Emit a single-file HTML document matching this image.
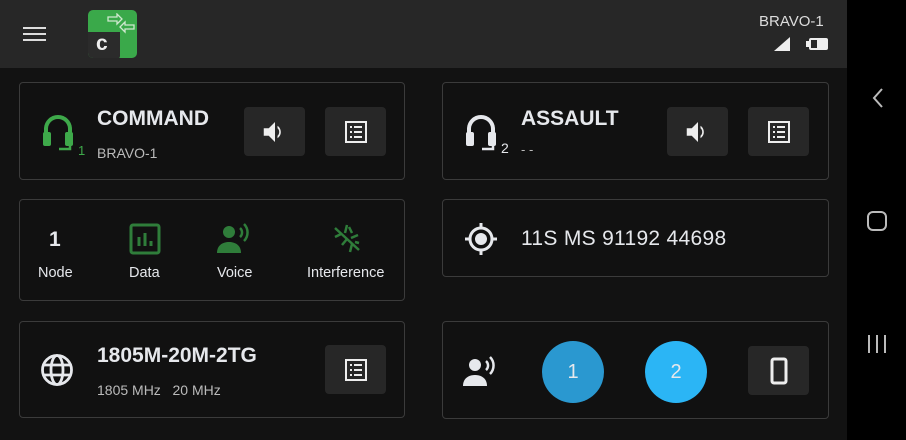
<!DOCTYPE html>
<html><head><style>
*{box-sizing:border-box;margin:0;padding:0}
body{width:906px;height:440px;background:#121212;font-family:"Liberation Sans",sans-serif;color:#e6e8ec;position:relative;overflow:hidden}
.abs{position:absolute}
.hdr{left:0;top:0;width:847px;height:68px;background:#272727}
.nav{left:847px;top:0;width:59px;height:440px;background:#000}
.card{position:absolute;border:1px solid #3b3b3b;border-radius:4px;background:#111}
.btn{position:absolute;background:#272727;border-radius:4px;display:flex;align-items:center;justify-content:center}
.t{position:absolute;white-space:nowrap}
</style></head><body>
<div class="abs hdr"></div>
<div class="abs nav"></div>
<div class="abs" style="left:23px;top:27px;width:23px;height:2px;background:#ddd"></div>
<div class="abs" style="left:23px;top:33px;width:23px;height:2px;background:#ddd"></div>
<div class="abs" style="left:23px;top:39px;width:23px;height:2px;background:#ddd"></div>
<!-- logo -->
<div class="abs" style="left:88px;top:10px;width:49px;height:48px;background:#3aa94a;border-radius:5px;overflow:hidden">
 <div class="abs" style="left:0;top:22px;width:32px;height:27px;background:#2b2b2b;border-radius:0 0 3px 0"></div>
 <div class="t" style="left:8px;top:22px;font-size:21px;font-weight:bold;color:#eee;line-height:24px">c</div>
 <svg class="abs" style="left:18px;top:3px" width="30" height="24" viewBox="0 0 30 24"><path d="M2 4h9V1l5 5-5 5V8H2z" fill="none" stroke="#cfe8cf" stroke-width="1.3"/><path d="M28 12h-9V9l-5 5 5 5v-3h9z" fill="none" stroke="#cfe8cf" stroke-width="1.3"/></svg>
</div>
<div class="t" style="left:759px;top:13px;font-size:15px;color:#ddd">BRAVO-1</div>
<svg class="abs" style="left:774px;top:37px" width="16" height="14"><path d="M0 14L16 0V14Z" fill="#eee"/></svg>
<svg class="abs" style="left:806px;top:38px" width="22" height="12"><rect x="3" y="0" width="19" height="12" rx="2" fill="#eee"/><rect x="0" y="3" width="3" height="6" fill="#eee"/><rect x="5" y="2" width="6" height="8" fill="#272727"/></svg>
<svg class="abs" style="left:870px;top:87px" width="16" height="22"><path d="M12 2L4 11l8 9" fill="none" stroke="#bbb" stroke-width="2"/></svg>
<div class="abs" style="left:867px;top:211px;width:20px;height:20px;border:2px solid #bbb;border-radius:6px"></div>
<div class="abs" style="left:868px;top:335px;width:2px;height:18px;background:#bbb"></div>
<div class="abs" style="left:876px;top:335px;width:2px;height:18px;background:#bbb"></div>
<div class="abs" style="left:884px;top:335px;width:2px;height:18px;background:#bbb"></div>

<!-- card command -->
<div class="card" style="left:19px;top:82px;width:386px;height:98px"></div>
<svg class="abs" style="left:41px;top:112px" width="34" height="40" viewBox="0 0 34 40"><path d="M5 26v-9a12 12 0 0 1 24 0v9" fill="none" stroke="#3ea94a" stroke-width="4"/><rect x="2" y="20" width="8" height="14" rx="2" fill="#3ea94a"/><rect x="24" y="20" width="8" height="14" rx="2" fill="#3ea94a"/><path d="M29 33v4h-11" fill="none" stroke="#3ea94a" stroke-width="2.5"/></svg>
<div class="t" style="left:78px;top:143px;font-size:13px;color:#3ea94a">1</div>
<div class="t" style="left:97px;top:107px;font-size:21px;font-weight:bold">COMMAND</div>
<div class="t" style="left:97px;top:145px;font-size:14px;color:#bbb">BRAVO-1</div>
<div class="btn" style="left:244px;top:107px;width:61px;height:49px"><svg width="30" height="30" viewBox="0 0 24 24"><path d="M3 9v6h4l5 5V4L7 9z M14 7a6 6 0 0 1 0 10v-2a4 4 0 0 0 0-6z" fill="#eee"/></svg></div>
<div class="btn" style="left:325px;top:107px;width:61px;height:49px"><svg width="22" height="22" viewBox="0 0 22 22"><rect x="1" y="1" width="20" height="20" fill="none" stroke="#eee" stroke-width="2"/><path d="M5 6h2M9 6h8M5 11h2M9 11h8M5 16h2M9 16h8" stroke="#eee" stroke-width="2"/></svg></div>

<!-- card assault -->
<div class="card" style="left:442px;top:82px;width:387px;height:98px"></div>
<svg class="abs" style="left:464px;top:112px" width="34" height="40" viewBox="0 0 34 40"><path d="M5 26v-9a12 12 0 0 1 24 0v9" fill="none" stroke="#e6e8ec" stroke-width="4"/><rect x="2" y="20" width="8" height="14" rx="2" fill="#e6e8ec"/><rect x="24" y="20" width="8" height="14" rx="2" fill="#e6e8ec"/><path d="M29 33v4h-11" fill="none" stroke="#e6e8ec" stroke-width="2.5"/></svg>
<div class="t" style="left:501px;top:140px;font-size:14px">2</div>
<div class="t" style="left:521px;top:107px;font-size:21px;font-weight:bold">ASSAULT</div>
<div class="t" style="left:521px;top:142px;font-size:13px;color:#bbb">- -</div>
<div class="btn" style="left:667px;top:107px;width:61px;height:49px"><svg width="30" height="30" viewBox="0 0 24 24"><path d="M3 9v6h4l5 5V4L7 9z M14 7a6 6 0 0 1 0 10v-2a4 4 0 0 0 0-6z" fill="#eee"/></svg></div>
<div class="btn" style="left:748px;top:107px;width:61px;height:49px"><svg width="22" height="22" viewBox="0 0 22 22"><rect x="1" y="1" width="20" height="20" fill="none" stroke="#eee" stroke-width="2"/><path d="M5 6h2M9 6h8M5 11h2M9 11h8M5 16h2M9 16h8" stroke="#eee" stroke-width="2"/></svg></div>

<!-- status card -->
<div class="card" style="left:19px;top:199px;width:386px;height:102px"></div>
<div class="t" style="left:49px;top:228px;font-size:21px;font-weight:bold">1</div>
<div class="t" style="left:38px;top:265px;font-size:14.5px">Node</div>
<svg class="abs" style="left:129px;top:223px" width="32" height="32"><rect x="2" y="2" width="28" height="28" rx="2" fill="none" stroke="#2f7d3a" stroke-width="3"/><path d="M10 23V14M16 23V10M22 23v-5" stroke="#2f7d3a" stroke-width="3"/></svg>
<div class="t" style="left:129px;top:265px;font-size:14.5px">Data</div>
<svg class="abs" style="left:216px;top:222px" width="38" height="32" viewBox="0 0 38 32"><circle cx="13" cy="10" r="6" fill="#2f7d3a"/><path d="M1 31c0-8 6-11 12-11s12 3 12 11z" fill="#2f7d3a"/><path d="M24 6a6 6 0 0 1 0 9M28 2a12 12 0 0 1 0 17" fill="none" stroke="#2f7d3a" stroke-width="2.5"/></svg>
<div class="t" style="left:217px;top:265px;font-size:14.5px">Voice</div>
<svg class="abs" style="left:331px;top:222px" width="32" height="32" viewBox="0 0 32 32" stroke="#2f7d3a" stroke-width="2.5" fill="none"><path d="M4 6l24 22M10 12l-6 3M16 17l-5 6M21 22l-2 8M14 11l2-8M20 16l7-3M18 5l3 6M24 20l4 1"/></svg>
<div class="t" style="left:307px;top:265px;font-size:14.5px">Interference</div>

<!-- location -->
<div class="card" style="left:442px;top:199px;width:387px;height:78px"></div>
<svg class="abs" style="left:463px;top:221px" width="36" height="36" viewBox="0 0 36 36"><circle cx="18" cy="18" r="11" fill="none" stroke="#e6e8ec" stroke-width="3"/><circle cx="18" cy="18" r="6" fill="#e6e8ec"/><path d="M18 2v5M18 29v5M2 18h5M29 18h5" stroke="#e6e8ec" stroke-width="3"/></svg>
<div class="t" style="left:521px;top:227px;font-size:21px;letter-spacing:0.3px">11S MS 91192 44698</div>

<!-- freq -->
<div class="card" style="left:19px;top:321px;width:386px;height:97px"></div>
<svg class="abs" style="left:40px;top:353px" width="34" height="34" viewBox="0 0 34 34" fill="none" stroke="#e6e8ec" stroke-width="2.8"><circle cx="17" cy="17" r="14.5"/><ellipse cx="17" cy="17" rx="6" ry="14.5"/><path d="M3 12h28M3 22h28"/></svg>
<div class="t" style="left:97px;top:344px;font-size:21px;font-weight:bold">1805M-20M-2TG</div>
<div class="t" style="left:97px;top:382px;font-size:14px;color:#bbb">1805 MHz&nbsp;&nbsp;&nbsp;20 MHz</div>
<div class="btn" style="left:325px;top:345px;width:61px;height:49px"><svg width="22" height="22" viewBox="0 0 22 22"><rect x="1" y="1" width="20" height="20" fill="none" stroke="#eee" stroke-width="2"/><path d="M5 6h2M9 6h8M5 11h2M9 11h8M5 16h2M9 16h8" stroke="#eee" stroke-width="2"/></svg></div>

<!-- talk groups -->
<div class="card" style="left:442px;top:321px;width:387px;height:98px"></div>
<svg class="abs" style="left:462px;top:355px" width="38" height="32" viewBox="0 0 38 32"><circle cx="13" cy="10" r="6" fill="#e6e8ec"/><path d="M1 31c0-8 6-11 12-11s12 3 12 11z" fill="#e6e8ec"/><path d="M24 6a6 6 0 0 1 0 9M28 2a12 12 0 0 1 0 17" fill="none" stroke="#e6e8ec" stroke-width="2.5"/></svg>
<div class="abs" style="left:542px;top:341px;width:62px;height:62px;border-radius:50%;background:#2a98d0;display:flex;align-items:center;justify-content:center;font-size:20px">1</div>
<div class="abs" style="left:645px;top:341px;width:62px;height:62px;border-radius:50%;background:#2bb5f5;display:flex;align-items:center;justify-content:center;font-size:20px">2</div>
<div class="btn" style="left:748px;top:346px;width:61px;height:49px"><svg width="18" height="28" viewBox="0 0 18 28"><rect x="2" y="2" width="14" height="24" rx="2" fill="none" stroke="#eee" stroke-width="3"/></svg></div>
</body></html>
